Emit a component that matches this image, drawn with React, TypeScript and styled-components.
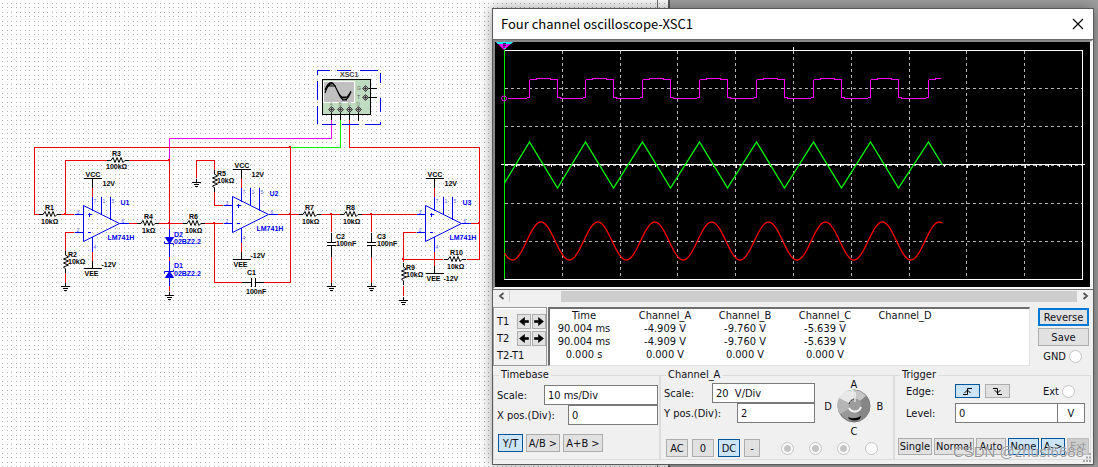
import React from "react";
import styled, { createGlobalStyle, css } from "styled-components";

const Global = createGlobalStyle`
  * { box-sizing: border-box; }
  html, body { margin: 0; padding: 0; overflow: hidden; }
  body { font: 11px/13px "DejaVu Sans Condensed", "DejaVu Sans", sans-serif; color: #101018; }
  button, input { font: inherit; color: inherit; margin: 0; }
`;

/* ---------- desktop ---------- */

const Desktop = styled.main`
  position: relative;
  min-height: 100vh;
  display: flex;
  overflow: hidden;
  background: #a1a1a1;
`;

const Sheet = styled.section`
  flex: 0 0 61%;
  height: 100vh;
  min-height: 467px;
  background: #fff;
  border-right: 2px solid #5c5c5c;
`;

const SheetDrawing = styled.svg`
  display: block;
  width: 100%;
  height: 100%;
`;

const RED = "#f00000";
const BLUE = "#0000f0";

type Pt = { x: number; y: number };

const Wire = ({ d, c = RED }: { d: string; c?: string }) => (
  <path d={d} fill="none" stroke={c} strokeWidth={1} shapeRendering="crispEdges" />
);

const Txt = ({ x, y, c = "#000", size = 7, children }: Pt & { c?: string; size?: number; children: React.ReactNode }) => (
  <text x={x} y={y} fill={c} fontSize={size} fontWeight={size > 5 ? 700 : 400} fontFamily='"Liberation Sans", Arial, sans-serif'>
    {children}
  </text>
);

const ResistorH = ({ x, y }: Pt) => (
  <path
    d={`M${x} ${y}h4l2 -3l2 5l2 -5l2 5l2 -5l2 5l2 -2h4`}
    fill="none"
    stroke="#000"
    strokeWidth={1}
  />
);

const ResistorV = ({ x, y }: Pt) => (
  <path
    d={`M${x} ${y}v4l3 2l-5 2l5 2l-5 2l5 2l-5 2l2 2v4`}
    fill="none"
    stroke="#000"
    strokeWidth={1}
  />
);

const Ground = ({ x, y }: Pt) => (
  <path
    d={`M${x} ${y - 4}v4M${x - 5} ${y}h9M${x - 3} ${y + 2}h5M${x - 2} ${y + 4}h3`}
    fill="none"
    stroke="#000"
    shapeRendering="crispEdges"
  />
);

const CapacitorV = ({ x, y }: Pt) => (
  <path
    d={`M${x} ${y}v10M${x - 5} ${y + 10}h9M${x - 5} ${y + 13}h9M${x} ${y + 13}v11`}
    fill="none"
    stroke="#000"
    shapeRendering="crispEdges"
  />
);

const Zener = ({ x, y, up }: Pt & { up?: boolean }) => (
  <g transform={up ? `translate(${x} ${y + 7}) scale(1 -1)` : `translate(${x} ${y})`}>
    <path d="M-4 0h8l-4 6z" fill={BLUE} stroke={BLUE} />
    <path d="M-5 4v2h9v2" fill="none" stroke={BLUE} />
  </g>
);

/* Amplifier anchored on the upper left corner of its triangle. */
const OpAmp = ({ x, y, name, veeGap = 9, veeText = 19 }: Pt & { name: string; veeGap?: number; veeText?: number }) => {
  const vee = y + 46 + veeGap + 8;
  return (
    <g>
      <path d={`M${x} ${y}v36l36 -18z`} fill="none" stroke={BLUE} />
      <Wire c={BLUE} d={`M${x - 9} ${y + 9}h9M${x - 9} ${y + 27}h9M${x + 36} ${y + 18}h9`} />
      <Wire c={BLUE} d={`M${x + 9} ${y - 9}v14M${x + 18} ${y - 9}v18M${x + 27} ${y - 9}v23M${x + 9} ${y + 31}v15`} />
      <Wire d={`M${x + 9} ${y - 18}v9M${x + 9} ${y + 46}v${veeGap}`} />
      <Wire
        c="#000"
        d={`M${x} ${y - 27}h18M${x + 9} ${y - 27}v9M${x + 9} ${vee - 8}v8M${x} ${vee}h18`}
      />
      <Wire c={BLUE} d={`M${x + 4} ${y + 9}h4M${x + 6} ${y + 7}v4M${x + 4} ${y + 27}h3`} />
      <Txt x={x + 2} y={y - 29}>VCC</Txt>
      <Txt x={x + 19} y={y - 20}>12V</Txt>
      <Txt x={x + 1} y={vee + 7}>VEE</Txt>
      <Txt x={x + 18} y={vee + 7 - (veeText - 10)}>-12V</Txt>
      <Txt x={x + 37} y={y - 1}  c={BLUE}>{name}</Txt>
      <Txt x={x + 24} y={y + 34} c={BLUE}>LM741H</Txt>
      <g opacity={0.65}>
        <Txt x={x - 7} y={y + 8} c={BLUE} size={5}>3</Txt>
        <Txt x={x - 7} y={y + 26} c={BLUE} size={5}>2</Txt>
        <Txt x={x + 38} y={y + 17} c={BLUE} size={5}>6</Txt>
        <Txt x={x + 10} y={y - 3} c={BLUE} size={5}>7</Txt>
        <Txt x={x + 19} y={y - 3} c={BLUE} size={5}>1</Txt>
        <Txt x={x + 28} y={y - 3} c={BLUE} size={5}>5</Txt>
        <Txt x={x + 10} y={y + 43} c={BLUE} size={5}>4</Txt>
      </g>
    </g>
  );
};

const Terminal = ({ x, y }: Pt) => (
  <path
    d={`M${x} ${y - 3}l3 3l-3 3l-3 -3zM${x - 2} ${y}h4M${x} ${y - 2}v4`}
    fill="#b0b0b0"
    stroke="#333"
    strokeWidth={0.9}
  />
);

const ScopeSymbol = () => (
  <g>
    <path
      d="M317.5 75V70.5H330M337 70.5H351M360 70.5H378M380.5 73V83M380.5 98V112M380.5 122V124.5H365M359 124.5H342M336 124.5H322M317.5 124V106M317.5 100V81"
      fill="none"
      stroke={BLUE}
      shapeRendering="crispEdges"
    />
    <rect x={322.5} y={79.5} width={48} height={35} fill="#c0dcc0" stroke="#000" />
    <rect x={323.5} y={81.5} width={31} height={21} fill="#c0c0c0" stroke="#fff" />
    <path d="M325 93c3 -9 7 -12 10 -7s5 14 9 14s5 -4 7 -8M325 90c3 -8 7 -10 10 -4s5 12 9 12s5 -4 7 -7M327 86h9M340 97h8M328 84h6M342 100h5" fill="none" stroke="#000" strokeWidth={1.1} />
    <Wire c="#000" d="M365.5 88.5h11M365.5 97.5h11M331.5 110v10M340.5 110v10M349.5 110v10M358.5 110v11" />
    {[331.5, 340.5, 349.5, 358.5].map((x, i) => (
      <g key={x}>
        <Terminal x={x} y={109.5} />
        <Txt x={x - 2} y={106} size={5} c="#789078">{"ABCD"[i]}</Txt>
      </g>
    ))}
    <Terminal x={365.5} y={88.5} />
    <Terminal x={365.5} y={97.5} />
    <Txt x={357} y={90} size={5} c="#555">G</Txt>
    <Txt x={357} y={99} size={5} c="#555">T</Txt>
    <Txt x={340} y={77} c="#444">XSC1</Txt>
  </g>
);

const Schematic = () => (
  <SheetDrawing role="img" aria-label="Circuit schematic">
    <defs>
      <pattern id="dots" width={9} height={9} patternUnits="userSpaceOnUse">
        {[[2, 3], [7, 3], [2, 7], [7, 7]].map(([x, y]) => (
          <rect key={`${x}-${y}`} x={x} y={y} width={1} height={1} fill="#b2b2b2" />
        ))}
      </pattern>
    </defs>
    <rect width="100%" height="100%" fill="url(#dots)" />
    <path d="M657.5 0v467" stroke="#707070" />

    <Wire c="#f000f0" d="M169.5 160v-21.5H331.5V120" />
    <Wire c="#00f000" d="M290 147.5H340.5V120" />
    <Wire d="M349.5 120V147.5H479.5V259.5H467M443 259.5H403.5M470 223.5H479" />
    <Wire d="M39 214.5H34.5V147.5H290.5V282.5H263M242 282.5H214.5V223.5" />
    <Wire d="M61 214.5H74M65.5 214.5V160.5H107M129 160.5H169.5V229M74 232.5H65.5V252M65.5 273V284M128 223.5H137M159 223.5H183M205 223.5H223" />
    <Wire d="M196.5 178V160.5H214.5V170M214.5 192V205.5H223M277 214.5H299M321 214.5H340M362 214.5H418" />
    <Wire d="M331.5 214.5V232M331.5 256V284M371.5 214.5V232M371.5 256V284M416 232.5H403.5V262M403.5 286V296M169.5 257v4M169.5 286v5" />
    <Wire c={BLUE} d="M169.5 229v28M169.5 261v25" />

    <ResistorH x={39} y={214.5} />
    <Txt x={45} y={210}>R1</Txt>
    <Txt x={41} y={224}>10kΩ</Txt>
    <ResistorH x={107} y={160.5} />
    <Txt x={112} y={156}>R3</Txt>
    <Txt x={106} y={169}>100kΩ</Txt>
    <ResistorV x={65.5} y={251} />
    <Txt x={68} y={257}>R2</Txt>
    <Txt x={68} y={264}>10kΩ</Txt>
    <Ground x={65.5} y={286.5} />
    <ResistorH x={137} y={223.5} />
    <Txt x={144} y={219}>R4</Txt>
    <Txt x={142} y={233}>1kΩ</Txt>
    <ResistorH x={183} y={223.5} />
    <Txt x={189} y={219}>R6</Txt>
    <Txt x={185} y={233}>10kΩ</Txt>
    <OpAmp x={83.5} y={205.5} name="U1" />

    <Zener x={169.5} y={237.5} />
    <Zener x={169.5} y={270.5} up />
    <Txt x={174} y={237} c={BLUE}>D2</Txt>
    <Txt x={174} y={244} c={BLUE}>02BZ2.2</Txt>
    <Txt x={174} y={268} c={BLUE}>D1</Txt>
    <Txt x={174} y={276} c={BLUE}>02BZ2.2</Txt>
    <Ground x={169.5} y={295.5} />

    <Ground x={196.5} y={182.5} />
    <ResistorV x={214.5} y={170} />
    <Txt x={217} y={176}>R5</Txt>
    <Txt x={217} y={183}>10kΩ</Txt>
    <OpAmp x={232.5} y={196.5} name="U2" />
    <Wire c="#000" d="M242 282.5h9M251.5 278v9M255.5 278v9M255 282.5h9" />
    <Txt x={247} y={275}>C1</Txt>
    <Txt x={246} y={294}>100nF</Txt>

    <ResistorH x={299} y={214.5} />
    <Txt x={305} y={210}>R7</Txt>
    <Txt x={302} y={224}>10kΩ</Txt>
    <ResistorH x={340} y={214.5} />
    <Txt x={346} y={210}>R8</Txt>
    <Txt x={343} y={224}>10kΩ</Txt>
    <CapacitorV x={331.5} y={232.5} />
    <Txt x={336} y={239}>C2</Txt>
    <Txt x={336} y={246}>100nF</Txt>
    <Ground x={331.5} y={286.5} />
    <CapacitorV x={371.5} y={232.5} />
    <Txt x={377} y={239}>C3</Txt>
    <Txt x={377} y={246}>100nF</Txt>
    <Ground x={371.5} y={286.5} />

    <OpAmp x={425.5} y={205.5} name="U3" veeGap={14} veeText={10} />
    <ResistorH x={444} y={259.5} />
    <Txt x={450} y={255}>R10</Txt>
    <Txt x={447} y={269}>10kΩ</Txt>
    <ResistorV x={403.5} y={263} />
    <Txt x={406} y={270}>R9</Txt>
    <Txt x={406} y={277}>10kΩ</Txt>
    <Ground x={403.5} y={300.5} />

    {[[65, 214], [169, 160], [169, 223], [214, 223], [290, 147], [290, 214], [331, 214], [371, 214], [479, 223], [403, 259]].map(
      ([x, y]) => <rect key={`${x},${y}`} x={x - 1} y={y - 1} width={2} height={2} fill={RED} />
    )}
    <ScopeSymbol />
  </SheetDrawing>
);

/* ---------- oscilloscope window ---------- */

const Dialog = styled.section`
  position: absolute;
  left: 492px;
  right: 4px;
  top: 8px;
  background: #f0f0f0;
  border: 1px solid #5a5a5a;
  box-shadow: 0 0 14px rgba(0, 0, 0, 0.4);
`;

const TitleBar = styled.header`
  display: flex;
  justify-content: space-between;
  align-items: center;
  height: 31px;
  padding: 0 9px 0 8px;
  background: #fff;
  border-bottom: 1px solid #6a6a6a;
`;

const Title = styled.h1`
  margin: 0;
  font: 400 13px/20px "Noto Sans CJK SC", "Noto Sans", sans-serif;
  color: #000;
`;

const CloseButton = styled.button`
  display: flex;
  padding: 0;
  border: 0;
  background: none;
`;

const ScopeFrame = styled.div`
  border-style: solid;
  border-width: 2px 3px 2px 2px;
  border-color: #8a8a8a #f8f8f8 #f8f8f8 #8a8a8a;
  background: #000;
`;

const Plot = styled.svg`
  display: block;
  width: 100%;
`;

const MAG_RISE = [529, 585, 642, 699, 756, 813, 870, 928];
const squarePath =
  "M508 98.5" +
  MAG_RISE.map((x, i) => {
    const up = `H${x - 3}l2 -1H${x + 0.5}V81l1 -1.5H${x + 7}V78.5`;
    return i < 7 ? `${up}H${x + 21}V79.5H${x + 28}V97H${x + 31}V98.5` : `${up}H941`;
  }).join("");

const trianglePath =
  "M504.5 183L529.5 142" + MAG_RISE.slice(0, 7).map((x, i) => `L${x + 28.5} 188L${MAG_RISE[i + 1] + 0.5} 142`).join("") + "L942.5 165";

const sinePath = Array.from({ length: 439 }, (_, i) => {
  const x = 504 + i;
  const y = 241 + 19 * Math.cos(((x - 512) / 56.9) * 2 * Math.PI);
  return `${i ? "L" : "M"}${x}.5 ${y.toFixed(1)}`;
}).join("");

const GRID_X = [562, 620, 677, 735, 793, 851, 909, 966, 1024];
const GRID_Y = [88, 126, 165, 203, 241];

const ScopePlot = () => (
  <Plot viewBox="495 42 595 245" role="img" aria-label="Channel traces">
    <g stroke="#b4b4b4" strokeDasharray="3 3" shapeRendering="crispEdges">
      {GRID_X.map((x) => <path key={x} d={`M${x}.5 51V279`} />)}
      {GRID_Y.map((y) => <path key={y} d={`M505 ${y}.5H1082`} />)}
    </g>
    <g stroke="#fff" fill="none" shapeRendering="crispEdges">
      <path d="M504 50.5H1082.5V279.5H504M501 164.5H1085M793.5 47V51" />
      {Array.from({ length: 49 }, (_, i) => (
        <path key={i} d={`M${Math.round(516 + i * 11.56)}.5 164v${i % 5 === 4 ? 4 : 3}`} />
      ))}
    </g>
    <path d="M504.5 50V279" stroke="#00f000" shapeRendering="crispEdges" />
    <path d={squarePath} fill="none" stroke="#ff00ff" shapeRendering="crispEdges" />
    <path d={trianglePath} fill="none" stroke="#00ff00" strokeWidth={1.3} />
    <path d={sinePath} fill="none" stroke="#ff0000" strokeWidth={1.3} />
    <circle cx={504} cy={98.5} r={2.5} fill="none" stroke="#ff00ff" />
    <path d="M496 42h17l-9 8z" fill="#ff00ff" />
    <path d="M496 42h17l-2 2h-13z" fill="#00ffff" />
    <path d="M503 43.5h3M503 45.5h3M504 43v5" stroke="#202060" />
    <path d="M504 48.5h2" stroke="#00ffff" />
  </Plot>
);

const ScrollBar = styled.div`
  display: flex;
  align-items: center;
  height: 13px;
  border-top: 1px solid #6a6a6a;
  margin-bottom: 5px;
`;

const ScrollButton = styled.button`
  flex: 0 0 16px;
  height: 12px;
  padding: 0;
  border: 0;
  background: none;
  display: flex;
  align-items: center;
  justify-content: center;
`;

const ScrollTrack = styled.div`
  flex: 1;
  height: 11px;
  margin-top: 1px;
  padding-left: 51px;
  border-left: 1px solid #d0d0d0;
`;

const ScrollThumb = styled.div`
  height: 100%;
  background: #cdcdcd;
`;

const Readout = styled.div`
  display: flex;
  height: 59px;
`;

const CursorPanel = styled.div`
  flex: 0 0 54px;
  display: grid;
  grid-template-columns: 19px 14px 14px;
  grid-template-rows: 17px 17px 17px;
  column-gap: 1px;
  align-items: center;
  padding: 5px 0 0 3px;
  border: 1px solid #9a9a9a;
  box-shadow: inset 1px 1px #fff;
`;

const CursorName = styled.span<{ $wide?: boolean }>`
  white-space: nowrap;
  ${(p) => p.$wide && css`grid-column: 1 / -1;`}
`;

const ArrowButton = styled.button`
  display: flex;
  align-items: center;
  justify-content: center;
  height: 15px;
  padding: 0;
  border: 1px solid #adadad;
  background: #e1e1e1;
`;

const ReadoutBox = styled.div`
  flex: 1;
  margin-left: 1px;
  background: #fff;
  border: 1px solid #e0e0e0;
  border-top: 2px solid #6e6e6e;
  border-left: 2px solid #6e6e6e;
`;

const ReadoutTable = styled.table`
  border-collapse: collapse;
  table-layout: fixed;
  width: 395px;
  line-height: 13px;

  th, td {
    width: 80px;
    height: 13px;
    padding: 0;
    font-weight: 400;
    text-align: center;
    white-space: nowrap;
  }

  th:first-child, td:first-child {
    width: 75px;
    padding-right: 7px;
  }
`;

const SideActions = styled.div`
  flex: 0 0 63px;
  display: flex;
  flex-direction: column;
  gap: 2px;
  padding: 1px 4px 0 8px;
`;

const Button = styled.button<{ $w?: number; $h?: number; $state?: "on" | "focus" }>`
  display: flex;
  align-items: center;
  justify-content: center;
  height: ${(p) => p.$h ?? 18}px;
  ${(p) => p.$w && css`width: ${p.$w}px;`}
  flex: none;
  padding: 0;
  white-space: nowrap;
  border: 1px solid #adadad;
  background: #e1e1e1;
  ${(p) => p.$state === "on" && css`border-color: #005499; background: #cce4f7;`}
  ${(p) => p.$state === "focus" && css`border: 2px solid #0078d7;`}
  &:disabled { color: #9a9a9a; background: #cccccc; border-color: #bfbfbf; }
`;

const RadioLabel = styled.label`
  display: flex;
  align-items: center;
  justify-content: flex-end;
  gap: 3px;
`;

const GroundLabel = styled(RadioLabel)`
  padding: 2px 7px 0 0;
`;

const Radio = styled.input.attrs({ type: "radio" })`
  appearance: none;
  width: 13px;
  height: 13px;
  border: 1px solid #c4c4c4;
  border-radius: 50%;
  background: #fff;
  &:checked { background: radial-gradient(circle, #c4c4c4 0 3px, #fafafa 4px); }
`;

const Groups = styled.div`
  display: grid;
  grid-template-columns: 167px 234px 1fr;
  padding: 5px 2px 4px 0;
`;

const Group = styled.fieldset<{ $top: number }>`
  min-width: 0;
  height: 89px;
  margin: 0;
  padding: ${(p) => p.$top}px 1px 0 3px;
  border: 1px solid #dcdcdc;
`;

const Legend = styled.legend`
  margin-left: 2px;
  padding: 0 2px;
  line-height: 8px;
`;

const Row = styled.div<{ $h?: number; $mt?: number; $gap?: number; $inset?: number }>`
  display: flex;
  align-items: center;
  height: ${(p) => p.$h ?? 20}px;
  margin-top: ${(p) => p.$mt ?? 0}px;
  padding-left: ${(p) => p.$inset ?? 0}px;
  gap: ${(p) => p.$gap ?? 0}px;
`;

const FieldLabel = styled.label`
  flex: 1;
  white-space: nowrap;
`;

const Field = styled.input<{ $w: number }>`
  width: ${(p) => p.$w}px;
  height: 20px;
  padding: 0 3px;
  border: 1px solid #7a7a7a;
  background: #fff;
`;

const UnitField = styled(Field)`
  text-align: center;
  margin-left: -1px;
`;

const ChannelTop = styled.div`
  display: flex;
`;

const ChannelForm = styled.div`
  flex: 0 0 151px;
  padding-top: 4px;
`;

const KnobArea = styled.div`
  display: grid;
  grid-template-areas: ". a ." "d knob b" ". c .";
  grid-template-columns: 16px 36px 16px;
  grid-template-rows: 10px 34px 16px;
  place-items: center;
  margin-left: 5px;
`;

const KnobMark = styled.span<{ $area: string }>`
  grid-area: ${(p) => p.$area};
`;

const KnobDial = styled.svg`
  grid-area: knob;
  display: block;
`;

const RadioStrip = styled.div`
  display: flex;
  gap: 15px;
  margin-left: 17px;
`;

const Edges = styled.div`
  display: flex;
  gap: 5px;
  flex: 0 0 88px;
`;

const TriggerForm = styled.div`
  padding: 0 6px 0 8px;
`;

const TriggerLabel = styled(FieldLabel)`
  flex: 0 0 49px;
`;

const Grip = styled.svg`
  position: absolute;
  right: 1px;
  bottom: 1px;
`;

const Watermark = styled.span`
  position: absolute;
  right: 14px;
  bottom: 5px;
  font: 15px/20px "Liberation Sans", Arial, sans-serif;
  color: rgba(120, 120, 120, 0.75);
  text-shadow: 0 0 1px #fff;
  white-space: nowrap;
  pointer-events: none;
`;

const Arrow = ({ right }: { right?: boolean }) => (
  <svg width={10} height={9} viewBox="0 0 10 9" aria-hidden="true">
    <path d={right ? "M0.5 3.5h4V0.5l5 4l-5 4V5.5h-4z" : "M9.5 3.5h-4V0.5l-5 4l5 4V5.5h4z"} fill="#000" stroke="#000" strokeWidth={0.6} />
  </svg>
);

const Chevron = ({ right }: { right?: boolean }) => (
  <svg width={7} height={8} viewBox="0 0 7 8" aria-hidden="true">
    <path d={right ? "M1.5 1L5 4L1.5 7" : "M5.5 1L2 4L5.5 7"} fill="none" stroke="#555" strokeWidth={1.8} />
  </svg>
);

const Knob = () => (
  <KnobDial width={34} height={34} viewBox="0 0 34 34" role="img" aria-label="Channel selector">
    <circle cx={17} cy={17} r={16} fill="#989898" stroke="#707070" />
    <path d="M17 17L2 9A16 16 0 0 1 17 1z" fill="#e8e8e8" />
    <path d="M17 17V1A16 16 0 0 1 29 7z" fill="#c6c6c6" />
    <path d="M17 17L2 9A16 16 0 0 0 3 25z" fill="#b6b6b6" />
    <path d="M17 17L29 7A16 16 0 0 1 25 31z" fill="#868686" />
    <circle cx={18} cy={16} r={6.5} fill="#9c9c9c" />
    <path d="M12 19A6.5 6.5 0 0 0 24 18" fill="none" stroke="#f2f2f2" strokeWidth={2} />
    <path d="M12 15A6.5 6.5 0 0 1 17 10" fill="none" stroke="#333" strokeDasharray="2 1" />
    <path d="M18 3V13" stroke="#fff" />
    <path d="M11 28q6 3 13 -1l-1 3q-6 3 -11 0z" fill="#000" />
  </KnobDial>
);

const EdgeIcon = ({ falling }: { falling?: boolean }) => (
  <svg width={11} height={9} viewBox="0 0 11 9" aria-hidden="true">
    <path
      d={falling ? "M1 1.5h4.5v6H10M2.5 3l3 3l3 -3" : "M1 7.5h4.5v-6H10M2.5 6l3 -3l3 3"}
      fill="none"
      stroke="#000"
    />
  </svg>
);

const HEADINGS = ["Time", "Channel_A", "Channel_B", "Channel_C", "Channel_D"];
const ROWS = [
  ["90.004 ms", "-4.909 V", "-9.760 V", "-5.639 V", ""],
  ["90.004 ms", "-4.909 V", "-9.760 V", "-5.639 V", ""],
  ["0.000 s", "0.000 V", "0.000 V", "0.000 V", ""],
];

const Oscilloscope = () => (
  <Dialog aria-labelledby="scope-title">
    <TitleBar>
      <Title id="scope-title">Four channel oscilloscope-XSC1</Title>
      <CloseButton aria-label="Close">
        <svg width={12} height={12} viewBox="0 0 12 12">
          <path d="M1 1L11 11M11 1L1 11" stroke="#000" strokeWidth={1.1} />
        </svg>
      </CloseButton>
    </TitleBar>
    <ScopeFrame>
      <ScopePlot />
    </ScopeFrame>
    <ScrollBar>
      <ScrollButton aria-label="Scroll left"><Chevron /></ScrollButton>
      <ScrollTrack><ScrollThumb /></ScrollTrack>
      <ScrollButton aria-label="Scroll right"><Chevron right /></ScrollButton>
    </ScrollBar>

    <Readout>
      <CursorPanel>
        <CursorName>T1</CursorName>
        <ArrowButton aria-label="T1 left"><Arrow /></ArrowButton>
        <ArrowButton aria-label="T1 right"><Arrow right /></ArrowButton>
        <CursorName>T2</CursorName>
        <ArrowButton aria-label="T2 left"><Arrow /></ArrowButton>
        <ArrowButton aria-label="T2 right"><Arrow right /></ArrowButton>
        <CursorName $wide>T2-T1</CursorName>
      </CursorPanel>
      <ReadoutBox>
        <ReadoutTable>
          <thead>
            <tr>{HEADINGS.map((h) => <th key={h} scope="col">{h}</th>)}</tr>
          </thead>
          <tbody>
            {ROWS.map((r, i) => (
              <tr key={i}>{r.map((c, j) => <td key={j}>{c}</td>)}</tr>
            ))}
          </tbody>
        </ReadoutTable>
      </ReadoutBox>
      <SideActions>
        <Button $state="focus">Reverse</Button>
        <Button>Save</Button>
        <GroundLabel>GND<Radio name="gnd" /></GroundLabel>
      </SideActions>
    </Readout>

    <Groups>
      <Group $top={6}>
        <Legend>Timebase</Legend>
        <Row>
          <FieldLabel htmlFor="tb-scale">Scale:</FieldLabel>
          <Field id="tb-scale" $w={114} defaultValue="10 ms/Div" />
        </Row>
        <Row>
          <FieldLabel htmlFor="tb-x">X pos.(Div):</FieldLabel>
          <Field id="tb-x" $w={90} defaultValue="0" />
        </Row>
        <Row $mt={9} $gap={3} $h={18} $inset={1}>
          <Button $w={25} $state="on">Y/T</Button>
          <Button $w={34}>A/B &gt;</Button>
          <Button $w={40}>A+B &gt;</Button>
        </Row>
      </Group>

      <Group $top={0}>
        <Legend>Channel_A</Legend>
        <ChannelTop>
          <ChannelForm>
            <Row>
              <FieldLabel htmlFor="ch-scale">Scale:</FieldLabel>
              <Field id="ch-scale" $w={103} defaultValue="20  V/Div" />
            </Row>
            <Row>
              <FieldLabel htmlFor="ch-y">Y pos.(Div):</FieldLabel>
              <Field id="ch-y" $w={78} defaultValue="2" />
            </Row>
          </ChannelForm>
          <KnobArea>
            <KnobMark $area="a">A</KnobMark>
            <KnobMark $area="d">D</KnobMark>
            <Knob />
            <KnobMark $area="b">B</KnobMark>
            <KnobMark $area="c">C</KnobMark>
          </KnobArea>
        </ChannelTop>
        <Row $gap={4} $h={18} $inset={2}>
          <Button $w={22}>AC</Button>
          <Button $w={22}>0</Button>
          <Button $w={22} $state="on">DC</Button>
          <Button $w={16}>-</Button>
          <RadioStrip>
            <Radio name="ch-a" aria-label="Channel A" defaultChecked />
            <Radio name="ch-b" aria-label="Channel B" defaultChecked />
            <Radio name="ch-c" aria-label="Channel C" defaultChecked />
            <Radio name="ch-d" aria-label="Channel D" />
          </RadioStrip>
        </Row>
      </Group>

      <Group $top={4}>
        <Legend>Trigger</Legend>
        <TriggerForm>
          <Row $h={16}>
            <TriggerLabel as="span">Edge:</TriggerLabel>
            <Edges>
              <Button $w={25} $h={14} $state="on" aria-label="Rising edge"><EdgeIcon /></Button>
              <Button $w={25} $h={14} aria-label="Falling edge"><EdgeIcon falling /></Button>
            </Edges>
            <RadioLabel>Ext<Radio name="ext" /></RadioLabel>
          </Row>
          <Row $mt={4}>
            <TriggerLabel htmlFor="tr-level">Level:</TriggerLabel>
            <Field id="tr-level" $w={103} defaultValue="0" />
            <UnitField $w={28} aria-label="Level unit" defaultValue="V" />
          </Row>
        </TriggerForm>
        <Row $mt={15} $gap={2} $h={17}>
          <Button $w={34} $h={17}>Single</Button>
          <Button $w={40} $h={17}>Normal</Button>
          <Button $w={30} $h={17}>Auto</Button>
          <Button $w={31} $h={17} $state="on">None</Button>
          <Button $w={24} $h={17} $state="on">A-&gt;</Button>
          <Button $w={22} $h={17} disabled>Ext</Button>
        </Row>
      </Group>
    </Groups>
    <Grip width={10} height={10} viewBox="0 0 10 10" aria-hidden="true">
      {[[7, 0], [4, 3.5], [7, 3.5], [1, 7], [4, 7], [7, 7]].map(([x, y]) => (
        <rect key={`${x}-${y}`} x={x} y={y} width={2} height={2} fill="#a8a8a8" />
      ))}
    </Grip>
  </Dialog>
);

export default function App() {
  return (
    <>
      <Global />
      <Desktop>
        <Sheet>
          <Schematic />
        </Sheet>
        <Oscilloscope />
        <Watermark>CSDN @zhusf6688</Watermark>
      </Desktop>
    </>
  );
}
